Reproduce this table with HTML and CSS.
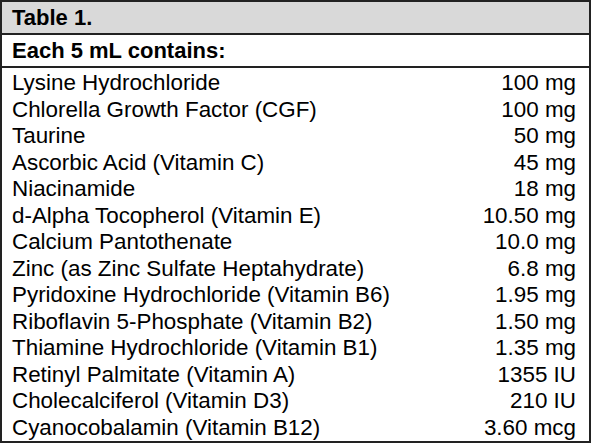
FILE: index.html
```html
<!DOCTYPE html>
<html lang="en">
<head>
    <meta charset="UTF-8">
    <title>Table 1</title>
    <link rel="stylesheet" href="styles.css">
</head>
<body>
    <div class="panel">
        <div class="title">Table 1.</div>
        <div class="subtitle">Each 5 mL contains:</div>
        <div class="rows">
            <div class="row"><span>Lysine Hydrochloride</span><span>100 mg</span></div>
            <div class="row"><span>Chlorella Growth Factor (CGF)</span><span>100 mg</span></div>
            <div class="row"><span>Taurine</span><span>50 mg</span></div>
            <div class="row"><span>Ascorbic Acid (Vitamin C)</span><span>45 mg</span></div>
            <div class="row"><span>Niacinamide</span><span>18 mg</span></div>
            <div class="row"><span>d-Alpha Tocopherol (Vitamin E)</span><span>10.50 mg</span></div>
            <div class="row"><span>Calcium Pantothenate</span><span>10.0 mg</span></div>
            <div class="row"><span>Zinc (as Zinc Sulfate Heptahydrate)</span><span>6.8 mg</span></div>
            <div class="row"><span>Pyridoxine Hydrochloride (Vitamin B6)</span><span>1.95 mg</span></div>
            <div class="row"><span>Riboflavin 5-Phosphate (Vitamin B2)</span><span>1.50 mg</span></div>
            <div class="row"><span>Thiamine Hydrochloride (Vitamin B1)</span><span>1.35 mg</span></div>
            <div class="row"><span>Retinyl Palmitate (Vitamin A)</span><span>1355 IU</span></div>
            <div class="row"><span>Cholecalciferol (Vitamin D3)</span><span>210 IU</span></div>
            <div class="row"><span>Cyanocobalamin (Vitamin B12)</span><span>3.60 mcg</span></div>
        </div>
    </div>
</body>
</html>
```

FILE: styles.css
```css
*{
    margin: 0px;
    padding: 0px;
    box-sizing: border-box;
}

body{
    font-family: "Liberation Sans", Arial, sans-serif;
    color: #000;
    background: #fff;
}

.panel{
    width: 591px;
    height: 443px;
    border: 2px solid #222;
}

.title{
    height: 33px;
    background: #d9d9d9;
    border-bottom: 2px solid #222;
    padding-left: 10px;
    font-size: 22px;
    font-weight: bold;
    line-height: 31px;
}

.subtitle{
    height: 33px;
    border-bottom: 2px solid #222;
    padding-left: 10px;
    font-size: 22px;
    font-weight: bold;
    line-height: 31px;
}

.rows{
    padding: 2px 13px 0 10px;
}

.row{
    display: flex;
    justify-content: space-between;
    height: 26.5px;
    line-height: 26.5px;
    font-size: 22.4px;
}
```
